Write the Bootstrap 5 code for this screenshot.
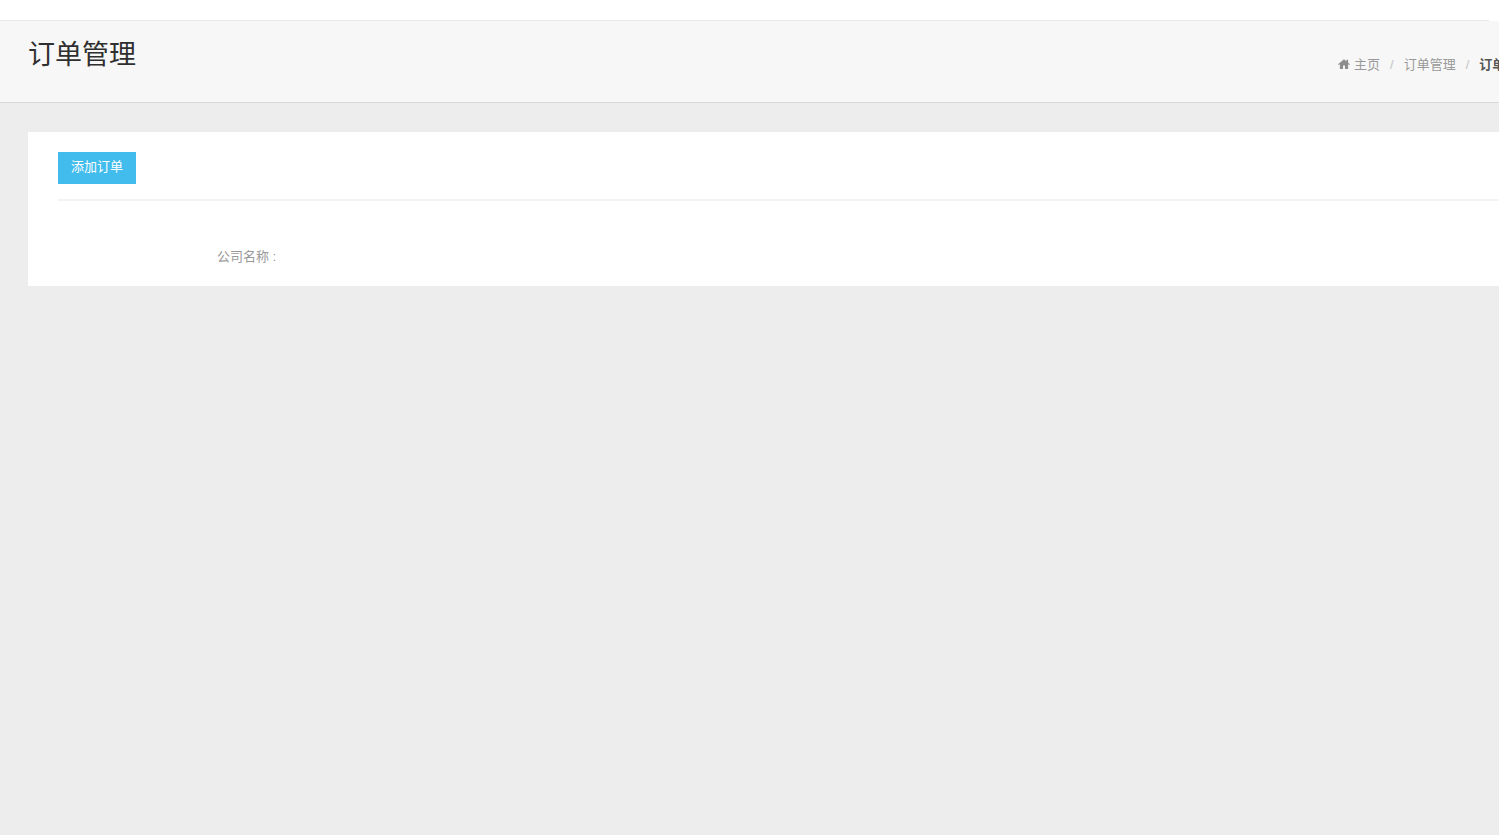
<!DOCTYPE html>
<html lang="zh">
<head>
<meta charset="utf-8">
<title>订单管理</title>
<link href="https://cdn.jsdelivr.net/npm/bootstrap@5.3.0/dist/css/bootstrap.min.css" rel="stylesheet">
<style>
html,body{height:100%;overflow:hidden}
body{background:#ededed;font-family:"Liberation Sans","Noto Sans CJK SC",sans-serif;font-size:13px;color:#676a6c;width:1499px}
.topgap{height:21px;background:#fff}
.topgap div{height:21px;width:1489px;border-bottom:1px solid #e7eaec}
.headbar{height:82px;background:#f7f7f7;border-bottom:1px solid #d9d9d9;padding-left:28px;width:1530px}
.headbar h2{font-size:27px;font-weight:400;color:#2f2f2f;line-height:36px;margin:16px 0 0}
.crumbs{width:192px;margin-top:34px;flex:none;white-space:nowrap;color:#999;font-size:13px;line-height:20px}
.crumbs svg{width:12px;height:12px;margin-right:4px;vertical-align:-1px;fill:#8d8d8d}
.crumbs .sep{color:#c4c4c4;margin:0 10px}
.crumbs strong{color:#555;font-weight:700}
.panelbox{margin:29px 0 0 28px;height:154px;width:1500px;background:#fff;padding:20px 0 0 30px}
.addbtn{background:#42bcec;color:#fff;border:0;border-radius:0;font-size:13px;width:78px;height:32px;padding:0 0 2px;line-height:28px}
.addbtn:hover{background:#42bcec;color:#fff}
.rule{height:2px;background:#f3f3f4;margin-top:15px}
.fieldlabel{margin:46px 0 0 159px;color:#999;font-size:13px;line-height:19px}
</style>
</head>
<body>
<div class="topgap"><div></div></div>
<div class="headbar d-flex justify-content-between">
  <h2>订单管理</h2>
  <div class="crumbs"><svg viewBox="0 0 16 16"><path d="M8 1.5 0 8.4l.9 1L2.5 8v6.5h4.2V10h2.6v4.5h4.2V8l1.6 1.4.9-1-2.5-2.2V2.200h-2.200v2.100z"/></svg>主页<span class="sep">/</span>订单管理<span class="sep">/</span><strong>订单管理</strong></div>
</div>
<div class="panelbox">
  <button type="button" class="btn addbtn d-block">添加订单</button>
  <div class="rule"></div>
  <div class="fieldlabel">公司名称 :</div>
</div>
<script src="https://cdn.jsdelivr.net/npm/bootstrap@5.3.0/dist/js/bootstrap.bundle.min.js"></script>
</body>
</html>
